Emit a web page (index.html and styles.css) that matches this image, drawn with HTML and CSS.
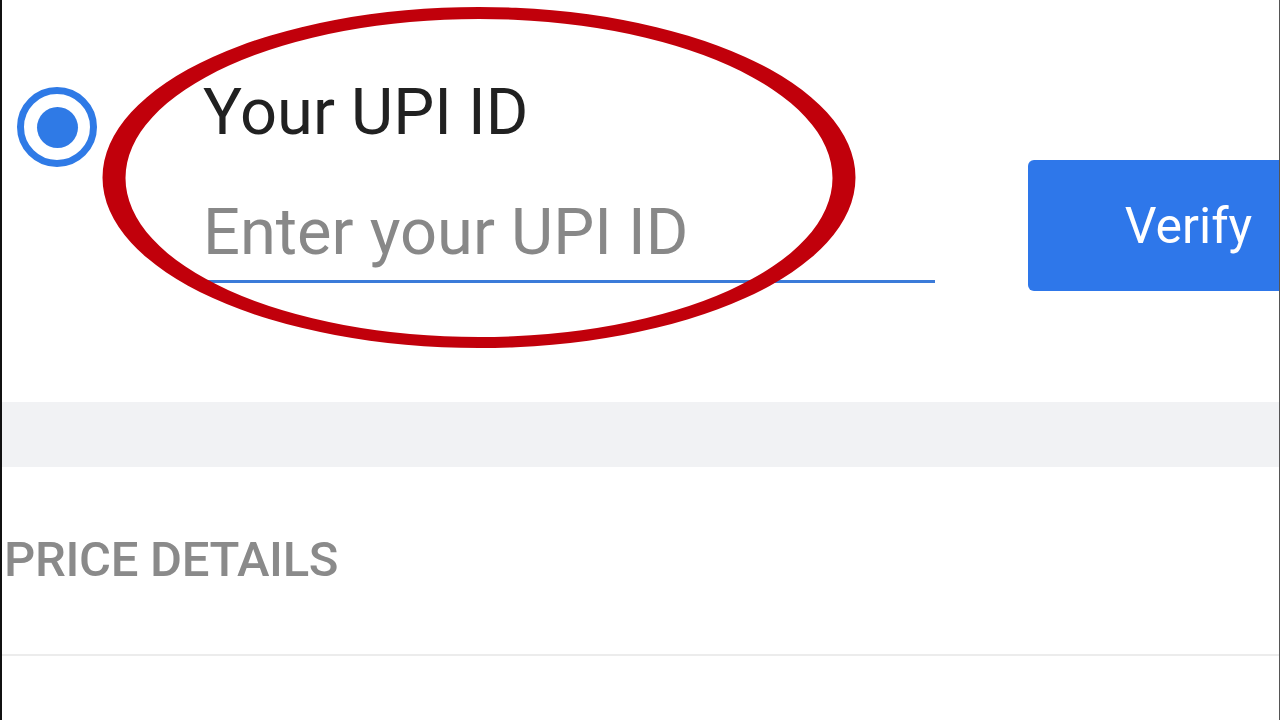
FILE: index.html
```html
<!DOCTYPE html>
<html lang="en">
<head>
<meta charset="utf-8">
<title>UPI payment</title>
<link rel="stylesheet" href="styles.css">
</head>
<body>
<div class="screen">
  <section class="upi">
    <div class="radio"><span class="dot"></span></div>
    <div class="field">
      <div class="label">Your UPI ID</div>
      <div class="input">Enter your UPI ID</div>
    </div>
    <button class="verify">Verify</button>
    <svg class="circle" width="780" height="360" viewBox="0 0 780 360" aria-hidden="true">
      <path fill="#c1000b" fill-rule="evenodd" d="M 1.5 170.5 A 376.5 170.5 0 1 0 754.5 170.5 A 376.5 170.5 0 1 0 1.5 170.5 Z M 24.5 171 A 353.5 159 0 1 0 731.5 171 A 353.5 159 0 1 0 24.5 171 Z"/>
    </svg>
  </section>
  <div class="band"></div>
  <section class="price">
    <h2 class="price-title">PRICE DETAILS</h2>
  </section>
</div>
</body>
</html>
```
FILE: styles.css
```css
html, body {
  margin: 0;
  padding: 0;
  background: #fff;
  overflow: hidden;
}
body {
  width: 1280px;
  height: 720px;
  font-family: Roboto, "Noto Sans", "Liberation Sans", sans-serif;
}
.screen {
  height: 720px;
  border-left: 2px solid #111;
  border-right: 1px solid #555;
  box-sizing: border-box;
  overflow: hidden;
}
.upi {
  position: relative;
  display: flex;
  align-items: flex-start;
  height: 402px;
}
.radio {
  flex: none;
  width: 80px;
  height: 80px;
  margin: 87px 0 0 15px;
  border: 7px solid #2f7ae6;
  border-radius: 50%;
  box-sizing: border-box;
  display: flex;
  align-items: center;
  justify-content: center;
}
.dot {
  width: 41px;
  height: 41px;
  border-radius: 50%;
  background: #2f7ae6;
}
.field {
  flex: none;
  width: 732px;
  margin-left: 106px;
}
.label {
  margin-top: 80.3px;
  font-size: 65px;
  line-height: 65px;
  color: #212121;
}
.input {
  margin-top: 55px;
  font-size: 65px;
  line-height: 65px;
  color: #888;
  padding-bottom: 14.7px;
  border-bottom: 3px solid #3b7bd9;
}
.verify {
  flex: none;
  margin: 160px 0 0 93px;
  width: 321px;
  height: 131px;
  border: none;
  border-radius: 6px;
  background: #2e77ea;
  color: #fff;
  font-family: Roboto, "Noto Sans", "Liberation Sans", sans-serif;
  font-size: 50px;
  padding: 0;
}
.circle {
  position: absolute;
  left: 99px;
  top: 7px;
}
.band {
  height: 65px;
  background: #f1f2f4;
}
.price {
  height: 187px;
  border-bottom: 2px solid #ececec;
  box-sizing: content-box;
}
.price-title {
  margin: 0;
  padding: 67.8px 0 0 2px;
  font-size: 49px;
  line-height: 49px;
  font-weight: 500;
  letter-spacing: -0.3px;
  color: #8a8a8a;
}
```
